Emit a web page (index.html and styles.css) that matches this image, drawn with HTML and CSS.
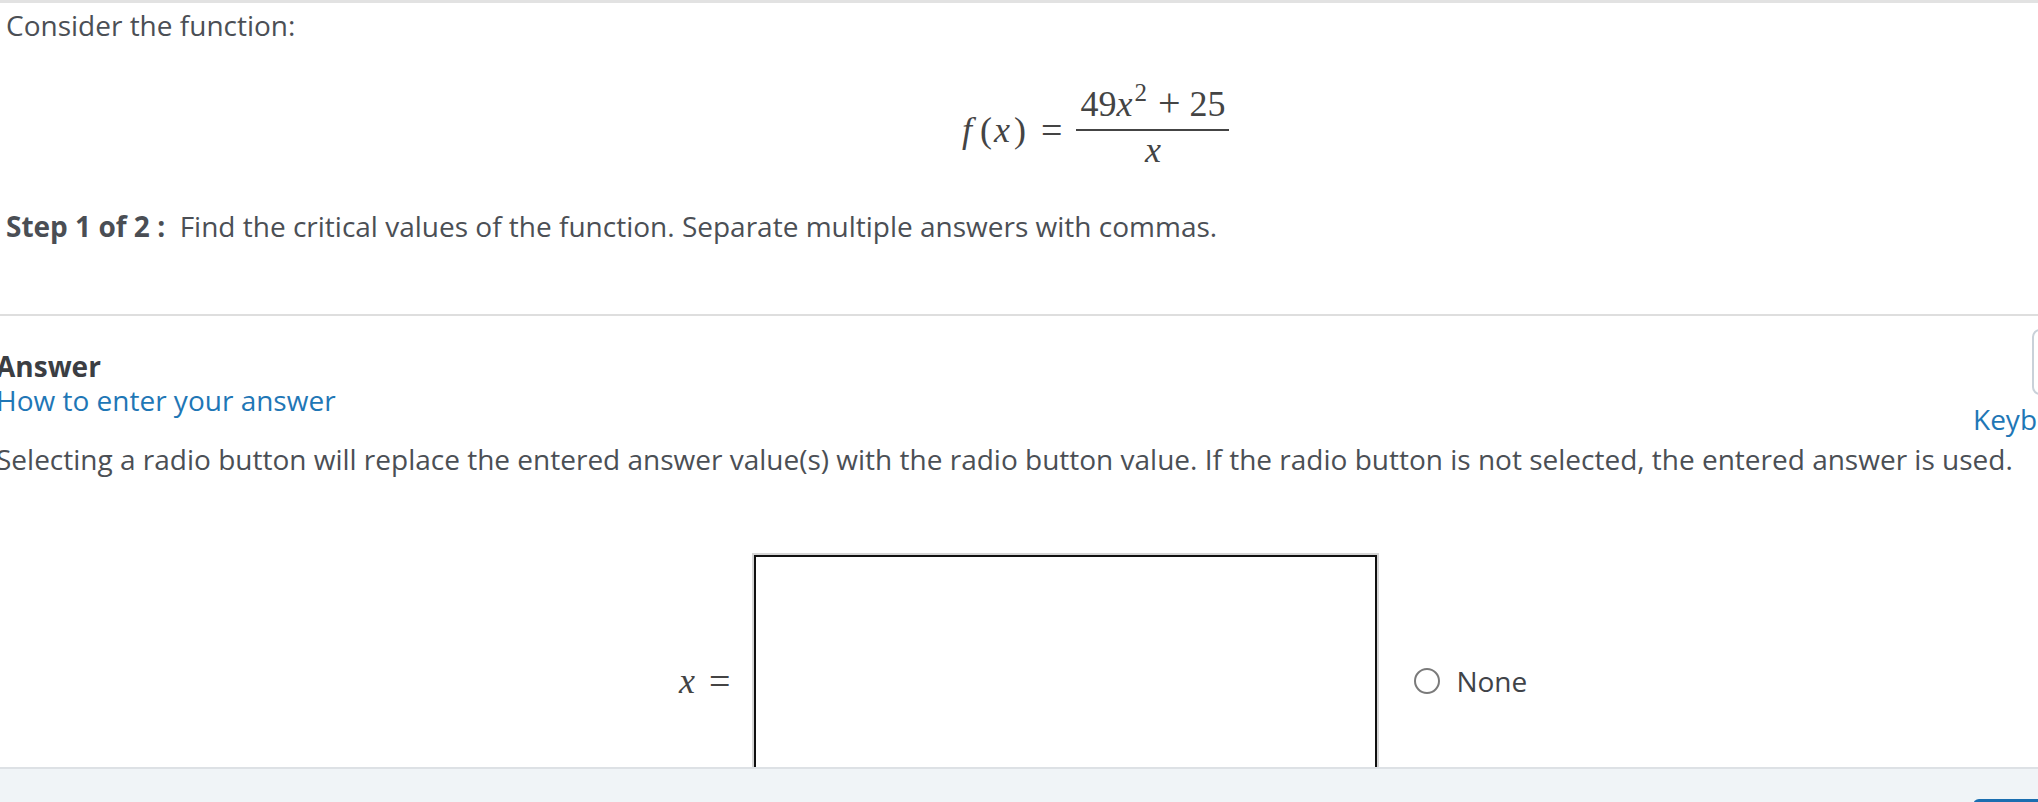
FILE: index.html
```html
<!DOCTYPE html>
<html lang="en">
<head>
<meta charset="utf-8">
<title>Critical values</title>
<link rel="stylesheet" href="styles.css">
</head>
<body>
<div class="page">
  <div class="top-rule"></div>
  <section class="question">
    <p class="intro">Consider the function:</p>
    <div class="formula">
      <span class="fx"><i class="f">f</i>(<i class="xv">x</i>)</span>
      <span class="eq">=</span>
      <span class="frac">
        <span class="num">49<i>x</i><sup>2</sup><span class="op">+</span>25</span>
        <span class="bar"></span>
        <span class="den"><i>x</i></span>
      </span>
    </div>
    <p class="step"><b>Step 1 of 2 :</b>&nbsp; Find the critical values of the function. Separate multiple answers with commas.</p>
  </section>
  <div class="divider"></div>
  <section class="answer">
    <div class="answer-head">
      <div class="answer-title">
        <h2>Answer</h2>
        <a class="link" href="#">How to enter your answer</a>
      </div>
      <div class="tools">
        <div class="tool-btn"></div>
        <a class="link kb" href="#">Keyboard Shortcuts</a>
      </div>
    </div>
    <p class="note">Selecting a radio button will replace the entered answer value(s) with the radio button value. If the radio button is not selected, the entered answer is used.</p>
    <div class="answer-row">
      <span class="var"><i>x</i><span class="veq">=</span></span>
      <div class="input-box"></div>
      <label class="radio"><span class="circle"></span>None</label>
    </div>
  </section>
</div>
<footer class="footer">
  <div class="submit"></div>
</footer>
</body>
</html>
```
FILE: styles.css
```css
html, body {
  margin: 0;
  padding: 0;
}
body {
  width: 2038px;
  height: 802px;
  overflow: hidden;
  background: #ffffff;
  font-family: "Open Sans", "Noto Sans", sans-serif;
  font-size: 28px;
  color: #4b4f55;
}
.page {
  width: 2038px;
}
.top-rule {
  height: 3px;
  background: #e2e2e2;
}
.question {
  padding-left: 6px;
}
.intro {
  margin: 2px 0 0;
  line-height: 40px;
}
.formula {
  display: flex;
  align-items: flex-start;
  margin-top: 38px;
  padding-left: 956px;
  font-family: "Liberation Serif", "DejaVu Serif", serif;
  font-size: 36px;
  color: #444444;
}
.formula i {
  font-style: italic;
}
.fx {
  line-height: 40px;
  margin-top: 27px;
}
.fx .f {
  margin-right: 8px;
}
.fx .xv {
  margin: 0 4px 0 2px;
}
.eq {
  line-height: 40px;
  margin: 27px 14px 0 15px;
  font-size: 38px;
}
.frac {
  display: flex;
  flex-direction: column;
  align-items: center;
}
.num {
  line-height: 40px;
  padding: 0 4px 5px;
  white-space: nowrap;
}
.num sup {
  font-size: 25px;
  line-height: 0;
  position: relative;
  top: -2px;
  margin-left: 2px;
}
.op {
  margin: 0 9px 0 11px;
  font-size: 40px;
}
.bar {
  align-self: stretch;
  height: 2px;
  background: #444444;
}
.den {
  line-height: 30px;
  margin-top: 4px;
}
.step {
  margin: 41px 0 0;
  line-height: 40px;
}
.step b {
  font-weight: 700;
  color: #4a4e54;
}
.divider {
  height: 2px;
  margin-top: 68px;
  background: #dedede;
}
.answer {
  width: 2277px;
  margin-left: -4px;
}
.answer-head {
  display: flex;
  justify-content: space-between;
  align-items: flex-start;
}
.answer-title {
  display: flex;
  flex-direction: column;
  padding-top: 33px;
}
.answer-title h2 {
  margin: 0;
  font-size: 28px;
  font-weight: 700;
  line-height: 34px;
  color: #3b3e43;
}
.link {
  color: #1f77b6;
  text-decoration: none;
  line-height: 34px;
}
.tools {
  width: 300px;
  display: flex;
  flex-direction: column;
  align-items: flex-start;
  padding-top: 13px;
}
.tool-btn {
  width: 120px;
  height: 66px;
  margin-left: 59px;
  border: 2px solid #c9d1d9;
  border-radius: 8px;
  box-sizing: border-box;
}
.kb {
  margin-top: 7px;
  white-space: nowrap;
}
.note {
  margin: 3px 0 0;
  line-height: 40px;
  white-space: nowrap;
}
.answer-row {
  display: flex;
  align-items: center;
  margin-top: 76px;
  padding-left: 683px;
}
.var {
  font-family: "Liberation Serif", "DejaVu Serif", serif;
  font-size: 36px;
  color: #444444;
  display: flex;
  align-items: center;
}
.veq {
  margin-left: 14px;
  font-size: 38px;
}
.input-box {
  width: 623px;
  height: 252px;
  margin-left: 24px;
  border: 2px solid #111111;
  box-shadow: 0 0 0 2px #d6d6d6;
  box-sizing: border-box;
}
.radio {
  display: flex;
  align-items: center;
  margin-left: 37px;
  color: #404348;
}
.circle {
  width: 22px;
  height: 22px;
  border: 2px solid #7a7a7a;
  border-radius: 50%;
  margin-right: 16px;
}
.footer {
  position: fixed;
  left: 0;
  right: 0;
  bottom: 0;
  height: 33px;
  background: #f0f4f7;
  border-top: 2px solid #dde1e5;
  display: flex;
  justify-content: flex-end;
}
.submit {
  width: 110px;
  height: 40px;
  margin-top: 30px;
  margin-right: -45px;
  background: #1a6eb0;
  border-radius: 6px;
}
```
